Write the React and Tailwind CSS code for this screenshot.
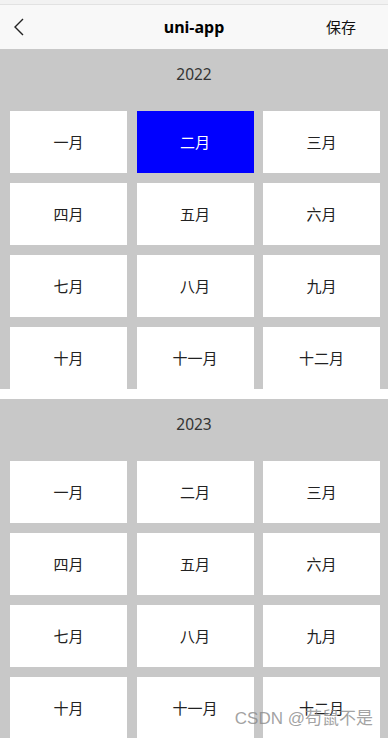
const months = ["一月", "二月", "三月", "四月", "五月", "六月", "七月", "八月", "九月", "十月", "十一月", "十二月"];

function YearBlock({ year, selected }) {
  return (
    <div className="bg-[#c8c8c8]">
      <div className="h-[52px] flex items-center justify-center text-[15.5px] text-[#333]">{year}</div>
      <div className="mt-[10px] pl-[10px] grid grid-cols-[117px_117px_117px] gap-x-[9.5px] gap-y-[10px]">
        {months.map((m, i) => (
          <div
            key={m}
            className={
              "h-[62px] flex items-center justify-center text-[15px] " +
              (i === selected ? "bg-[#0000ff] text-white" : "bg-white text-[#222]")
            }
          >
            {m}
          </div>
        ))}
      </div>
    </div>
  );
}

export default function App() {
  return (
    <div
      className="relative w-[388px] h-[738px] overflow-hidden bg-white"
      style={{ fontFamily: '"Noto Sans", "Noto Sans CJK SC", sans-serif' }}
    >
      {/* nav bar */}
      <div className="h-[4px] bg-[#f2f2f2]" />
      <div className="h-[45px] bg-[#f8f8f8] border-t border-[#e2e2e2] flex items-center justify-between pl-[12px] pr-[32px]">
        <svg width="14" height="20" viewBox="0 0 14 20" fill="none">
          <path d="M11 2 L3 10 L11 18" stroke="#222" strokeWidth="1.4" />
        </svg>
        <div className="text-[16px] font-bold text-black ml-[36px]">uni-app</div>
        <div className="text-[15px] text-[#111]">保存</div>
      </div>

      <YearBlock year="2022" selected={1} />
      <div className="h-[10px]" />
      <YearBlock year="2023" selected={-1} />

      <div
        className="absolute right-[15px] bottom-[7px] text-[17px] text-[#8a8a8a]/80"
        style={{ fontFamily: '"Liberation Sans", "Noto Sans CJK SC", sans-serif' }}
      >
        CSDN @苟鼠不是
      </div>
    </div>
  );
}
